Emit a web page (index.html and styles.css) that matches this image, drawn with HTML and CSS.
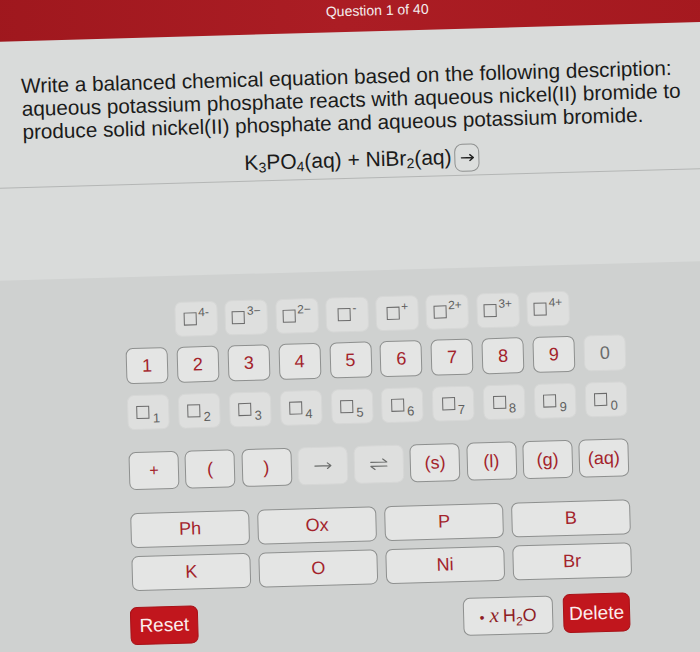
FILE: index.html
```html
<!DOCTYPE html>
<html>
<head>
<meta charset="utf-8">
<link rel="stylesheet" href="styles.css">
</head>
<body>
<div class="frame">
<div class="screen">
  <header class="topbar"><span class="qnum">Question 1 of 40</span></header>
  <section class="question">
    <p class="prompt">Write a balanced chemical equation based on the following description: aqueous potassium phosphate reacts with aqueous nickel(II) bromide to produce solid nickel(II) phosphate and aqueous potassium bromide.</p>
    <div class="equation">K<sub>3</sub>PO<sub>4</sub>(aq) + NiBr<sub>2</sub>(aq)<span class="answer"><svg class="eqarrow" viewBox="0 0 14 8" width="14" height="8"><path d="M1 4H13M9.5 1L13 4L9.5 7" fill="none" stroke="#222" stroke-width="1.4" stroke-linecap="round" stroke-linejoin="round"/></svg></span></div>
  </section>
  <div class="blank"></div>
  <section class="keypad">
    <div class="row charges">
      <button class="key soft"><span><span class="box"></span><sup>4-</sup></span></button>
      <button class="key soft"><span><span class="box"></span><sup>3−</sup></span></button>
      <button class="key soft"><span><span class="box"></span><sup>2−</sup></span></button>
      <button class="key soft"><span><span class="box"></span><sup>-</sup></span></button>
      <button class="key soft"><span><span class="box"></span><sup>+</sup></span></button>
      <button class="key soft"><span><span class="box"></span><sup>2+</sup></span></button>
      <button class="key soft"><span><span class="box"></span><sup>3+</sup></span></button>
      <button class="key soft"><span><span class="box"></span><sup>4+</sup></span></button>
    </div>
    <div class="row digits">
      <button class="key hard">1</button>
      <button class="key hard">2</button>
      <button class="key hard">3</button>
      <button class="key hard">4</button>
      <button class="key hard">5</button>
      <button class="key hard">6</button>
      <button class="key hard">7</button>
      <button class="key hard">8</button>
      <button class="key hard">9</button>
      <button class="key soft grey">0</button>
    </div>
    <div class="row subs">
      <button class="key soft"><span><span class="box"></span><sub>1</sub></span></button>
      <button class="key soft"><span><span class="box"></span><sub>2</sub></span></button>
      <button class="key soft"><span><span class="box"></span><sub>3</sub></span></button>
      <button class="key soft"><span><span class="box"></span><sub>4</sub></span></button>
      <button class="key soft"><span><span class="box"></span><sub>5</sub></span></button>
      <button class="key soft"><span><span class="box"></span><sub>6</sub></span></button>
      <button class="key soft"><span><span class="box"></span><sub>7</sub></span></button>
      <button class="key soft"><span><span class="box"></span><sub>8</sub></span></button>
      <button class="key soft"><span><span class="box"></span><sub>9</sub></span></button>
      <button class="key soft"><span><span class="box"></span><sub>0</sub></span></button>
    </div>
    <div class="row symbols">
      <button class="key hard small">+</button>
      <button class="key hard">(</button>
      <button class="key hard">)</button>
      <button class="key soft grey" aria-label="yields"><svg viewBox="0 0 18 8" width="18" height="8"><path d="M1 4H17M13.5 1.2L17 4L13.5 6.8" fill="none" stroke="#6a6c6b" stroke-width="1.2" stroke-linecap="round" stroke-linejoin="round"/></svg></button>
      <button class="key soft grey" aria-label="equilibrium"><svg viewBox="0 0 18 12" width="18" height="12"><path d="M1 4H17L13 0.8M17 8H1L5 11.2" fill="none" stroke="#6a6c6b" stroke-width="1.2" stroke-linecap="round" stroke-linejoin="round"/></svg></button>
      <button class="key hard">(s)</button>
      <button class="key hard">(l)</button>
      <button class="key hard">(g)</button>
      <button class="key hard">(aq)</button>
    </div>
    <div class="row elements first">
      <button class="key hard">Ph</button>
      <button class="key hard">Ox</button>
      <button class="key hard">P</button>
      <button class="key hard">B</button>
    </div>
    <div class="row elements">
      <button class="key hard">K</button>
      <button class="key hard">O</button>
      <button class="key hard">Ni</button>
      <button class="key hard">Br</button>
    </div>
    <div class="row actions">
      <button class="key red reset">Reset</button>
      <div class="right">
        <button class="key hard water"><span><span class="dot">•</span><i>x</i>H<sub>2</sub>O</span></button>
        <button class="key red delete">Delete</button>
      </div>
    </div>
  </section>
</div>
</div>
</body>
</html>
```
FILE: styles.css
```css
html, body {
  margin: 0;
  padding: 0;
  width: 700px;
  height: 652px;
  overflow: hidden;
  background: #d3d5d4;
  font-family: "Liberation Sans", Arial, sans-serif;
}

.frame {
  width: 700px;
  height: 652px;
  overflow: hidden;
}

.screen {
  width: 760px;
  height: 740px;
  margin: -30px 0 0 -30px;
  background: #d9dbda;
  transform: rotate(-1.6deg);
  transform-origin: 380px 356px;
}

.topbar {
  height: 30px;
  padding: 32px 0 0 72px;
  background: linear-gradient(90deg, #9e171d, #ab1d24 50%, #a5191f);
  text-align: center;
  box-sizing: content-box;
}

.qnum {
  display: inline-block;
  color: #f4eeee;
  font-size: 14px;
  line-height: 18px;
}

.question {
  padding: 33px 0 0 58px;
  border-bottom: 1px solid #b4b6b5;
  padding-bottom: 4px;
  width: 700px;
}

.prompt {
  margin: 0;
  width: 670px;
  font-size: 20.7px;
  line-height: 23px;
  color: #1b1b1b;
}

.equation {
  margin: 12px 0 0 221px;
  height: 28px;
  line-height: 28px;
  font-size: 21px;
  color: #1b1b1b;
  white-space: nowrap;
}

.equation sub {
  font-size: 14px;
  vertical-align: -3px;
  line-height: 0;
}

.answer {
  display: inline-flex;
  align-items: center;
  justify-content: center;
  vertical-align: middle;
  margin-left: 3px;
  width: 25px;
  height: 28px;
  border: 1px solid #8f9190;
  border-radius: 8px;
  background: #dcdedd;
  box-sizing: border-box;
}

.blank {
  height: 92px;
}

.keypad {
  background: #cfd1d0;
  padding: 26px 0 0 155px;
  height: 400px;
}

.row {
  width: 500px;
  display: flex;
  justify-content: space-between;
}

.key {
  font-family: "Liberation Sans", Arial, sans-serif;
  padding: 0;
  margin: 0;
  border-radius: 7px;
  display: flex;
  align-items: center;
  justify-content: center;
  color: #a3232b;
  font-size: 18px;
  box-sizing: border-box;
}

.hard {
  background: #e4e5e4;
  border: 1px solid #8e908f;
}

.soft {
  background: #dedfde;
  border: 1px solid #d6d7d6;
}

.grey {
  color: #6a6c6b;
}

.box {
  display: inline-block;
  width: 13px;
  height: 13px;
  border: 1.3px solid #6a6a6a;
  box-sizing: border-box;
  vertical-align: -1px;
}

.key sup, .key sub {
  color: #5e5f5e;
  font-size: 12px;
  line-height: 0;
  margin-left: 2px;
}

.key sup {
  vertical-align: 8px;
}

.key sub {
  font-size: 13px;
  margin-left: 3px;
  vertical-align: -5px;
}

.charges {
  width: 395px;
  margin-left: 50px;
}

.charges .key {
  width: 43px;
  height: 35px;
}

.digits {
  margin-top: 10px;
}

.digits .key {
  width: 42px;
  height: 36px;
}

.subs {
  margin-top: 11px;
}

.subs .key {
  width: 42px;
  height: 35px;
}

.symbols {
  margin-top: 22px;
}

.symbols .key {
  width: 50px;
  height: 38px;
}

.symbols .small {
  font-size: 16px;
}

.elements {
  margin-top: 8px;
}

.elements.first {
  margin-top: 23px;
}

.elements .key {
  width: 119px;
  height: 35px;
}

.actions {
  margin-top: 15px;
  margin-left: -3px;
  width: 500px;
  align-items: flex-end;
}

.right {
  display: flex;
  gap: 10px;
  align-items: center;
}

.red {
  background: #c1161d;
  border: 1px solid #a81218;
  color: #fbeeee;
  font-size: 19px;
}

.reset {
  width: 68px;
  height: 38px;
}

.delete {
  width: 67px;
  height: 39px;
}

.water {
  width: 90px;
  height: 38px;
  color: #8e1c24;
  font-size: 18px;
}

.water i {
  font-family: "Liberation Serif", "Times New Roman", serif;
  font-size: 21px;
  margin: 0 4px 0 5px;
}

.water .dot {
  font-size: 14px;
}

.water sub {
  color: #8e1c24;
  font-size: 12px;
  margin-left: 0;
  vertical-align: -4px;
}
```
